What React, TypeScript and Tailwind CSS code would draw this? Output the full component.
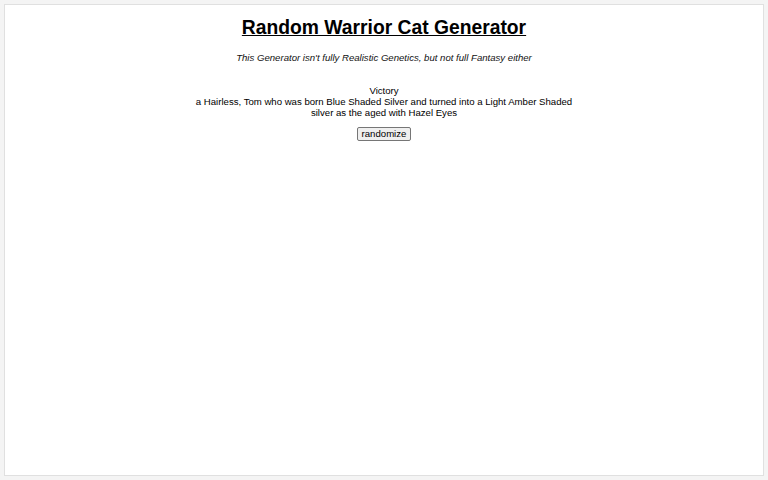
export default function App() {
  return (
    <div className="min-h-screen bg-[#f4f4f4] p-[4px] font-['Liberation_Sans',Arial,sans-serif] text-black">
      <div className="h-[472px] border border-[#e0e0e0] bg-white flex flex-col items-center">
        <h1 className="mt-[11px] text-[19.3px] leading-[24px] font-bold underline">Random Warrior Cat Generator</h1>
        <p className="mt-[12px] text-[9.6px] leading-[12px] italic text-[#111]">
          This Generator isn't fully Realistic Genetics, but not full Fantasy either
        </p>
        <div className="mt-[21px] w-[384px] text-center text-[9.6px] leading-[11px]">
          <div>Victory</div>
          <div>
            a Hairless, Tom who was born Blue Shaded Silver and turned into a Light Amber Shaded silver as the aged with Hazel Eyes
          </div>
        </div>
        <button className="mt-[9px] h-[14px] w-[54px] text-[9.6px] leading-[10px] bg-[#efefef] border border-[#767676] rounded-[2px]">
          randomize
        </button>
      </div>
    </div>
  );
}
